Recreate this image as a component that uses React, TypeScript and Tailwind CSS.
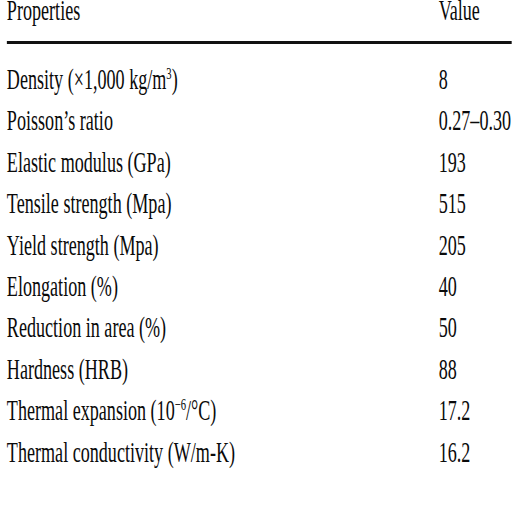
import React from "react";

const rows: [React.ReactNode, string][] = [
  [<>Density (×1,000 kg/m<sup className="text-[17px] -top-[0.6em]">3</sup>)</>, "8"],
  ["Poisson’s ratio", "0.27–0.30"],
  ["Elastic modulus (GPa)", "193"],
  ["Tensile strength (Mpa)", "515"],
  ["Yield strength (Mpa)", "205"],
  ["Elongation (%)", "40"],
  ["Reduction in area (%)", "50"],
  ["Hardness (HRB)", "88"],
  [<>Thermal expansion (10<sup className="text-[17px] -top-[0.6em]">−6</sup>/°C)</>, "17.2"],
  ["Thermal conductivity (W/m-K)", "16.2"],
];

export default function App() {
  return (
    <div className="w-[512px] h-[512px] overflow-hidden bg-white">
      <div
        className="w-[820px] origin-top-left scale-x-[0.624] pl-[11px] text-[29px] leading-[41.4px] text-[#0a0a0a] whitespace-nowrap"
        style={{ fontFamily: '"Liberation Serif", "Times New Roman", serif' }}
      >
        <div className="grid grid-cols-[692px_1fr] -mt-[10px]">
          <div>Properties</div>
          <div>Value</div>
        </div>
        <div className="mt-[10px] h-[3px] bg-[#111]" />
        <div className="mt-[14.5px] flex flex-col">
          {rows.map(([label, value], i) => (
            <div key={i} className="grid grid-cols-[692px_1fr]">
              <div>{label}</div>
              <div>{value}</div>
            </div>
          ))}
        </div>
      </div>
    </div>
  );
}
